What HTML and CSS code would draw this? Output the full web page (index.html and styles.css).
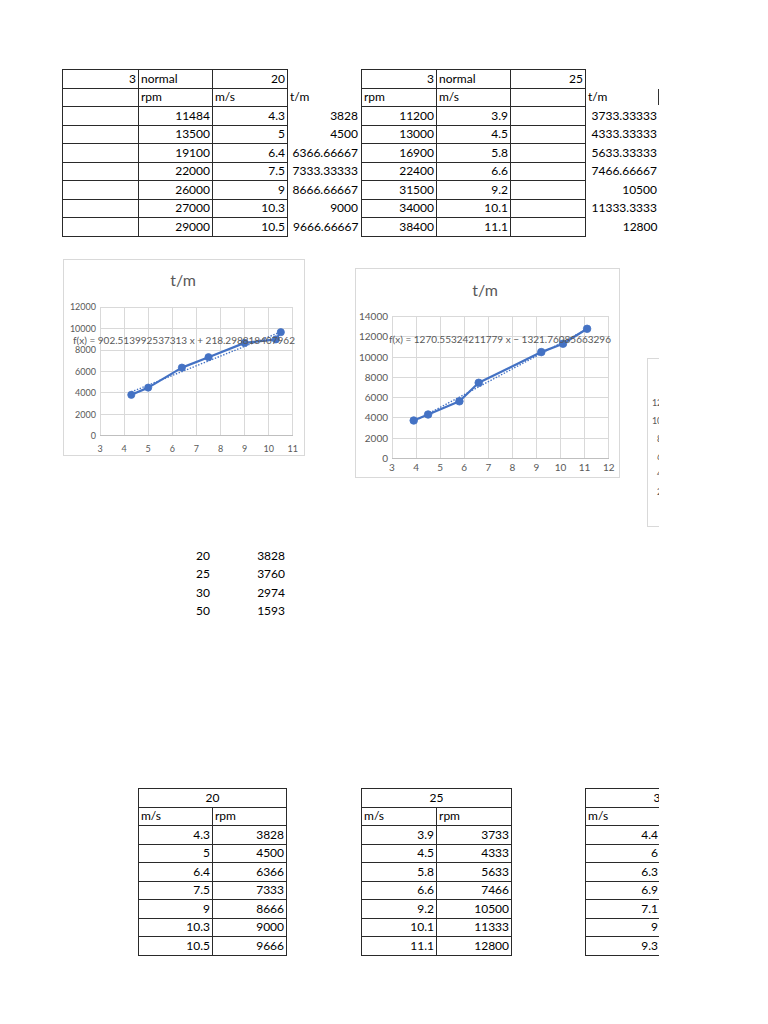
FILE: index.html
```html
<!DOCTYPE html>
<html>
<head>
<meta charset="utf-8">
<title>Sheet</title>
<link rel="stylesheet" href="styles.css">
</head>
<body>
<div class="sheet">
  <div class="band">
    <table class="grid top">
      <colgroup><col class="w76"><col class="w74"><col class="w75"><col class="w73"></colgroup>
      <tr><td class="r">3</td><td>normal</td><td class="r">20</td><td class="nb"></td></tr>
      <tr><td></td><td>rpm</td><td>m/s</td><td class="nb">t/m</td></tr>
      <tr><td></td><td class="r">11484</td><td class="r">4.3</td><td class="nb r">3828</td></tr>
      <tr><td></td><td class="r">13500</td><td class="r">5</td><td class="nb r">4500</td></tr>
      <tr><td></td><td class="r">19100</td><td class="r">6.4</td><td class="nb r">6366.66667</td></tr>
      <tr><td></td><td class="r">22000</td><td class="r">7.5</td><td class="nb r">7333.33333</td></tr>
      <tr><td></td><td class="r">26000</td><td class="r">9</td><td class="nb r">8666.66667</td></tr>
      <tr><td></td><td class="r">27000</td><td class="r">10.3</td><td class="nb r">9000</td></tr>
      <tr><td></td><td class="r">29000</td><td class="r">10.5</td><td class="nb r">9666.66667</td></tr>
    </table>
    <table class="grid top">
      <colgroup><col class="w75"><col class="w74"><col class="w75"><col class="w74"></colgroup>
      <tr><td class="r">3</td><td>normal</td><td class="r">25</td><td class="nb"></td></tr>
      <tr><td>rpm</td><td>m/s</td><td></td><td class="nb cursor">t/m</td></tr>
      <tr><td class="r">11200</td><td class="r">3.9</td><td></td><td class="nb r">3733.33333</td></tr>
      <tr><td class="r">13000</td><td class="r">4.5</td><td></td><td class="nb r">4333.33333</td></tr>
      <tr><td class="r">16900</td><td class="r">5.8</td><td></td><td class="nb r">5633.33333</td></tr>
      <tr><td class="r">22400</td><td class="r">6.6</td><td></td><td class="nb r">7466.66667</td></tr>
      <tr><td class="r">31500</td><td class="r">9.2</td><td></td><td class="nb r">10500</td></tr>
      <tr><td class="r">34000</td><td class="r">10.1</td><td></td><td class="nb r">11333.3333</td></tr>
      <tr><td class="r">38400</td><td class="r">11.1</td><td></td><td class="nb r">12800</td></tr>
    </table>
  </div>

  <div class="charts">
    <div class="chart chart1">
      <svg viewBox="0 0 242 197" width="242" height="197">
        <rect x="0.5" y="0.5" width="241" height="196" fill="#fff" stroke="#d9d9d9"/>
        <text class="ttl" x="120" y="27" text-anchor="middle">t/m</text>
        <path class="gl" d="M37 48.5H230M37 69.5H230M37 91.5H230M37 112.5H230M37 133.5H230M37 155.5H230M37.5 48V177M61.5 48V177M85.5 48V177M109.5 48V177M133.5 48V177M157.5 48V177M181.5 48V177M205.5 48V177M229.5 48V177"/>
        <path class="ax" d="M37 176.5H230"/>
        <g class="lbl9" text-anchor="end">
          <text x="33" y="51.4">12000</text>
          <text x="33" y="72.8">10000</text>
          <text x="33" y="94.3">8000</text>
          <text x="33" y="115.7">6000</text>
          <text x="33" y="137.1">4000</text>
          <text x="33" y="158.6">2000</text>
          <text x="33" y="180">0</text>
        </g>
        <g class="lbl9" text-anchor="middle">
          <text x="37" y="192.5">3</text>
          <text x="61.1" y="192.5">4</text>
          <text x="85.2" y="192.5">5</text>
          <text x="109.3" y="192.5">6</text>
          <text x="133.4" y="192.5">7</text>
          <text x="157.5" y="192.5">8</text>
          <text x="181.6" y="192.5">9</text>
          <text x="205.7" y="192.5">10</text>
          <text x="229.8" y="192.5">11</text>
        </g>
        <polyline class="series" points="68.3,135.8 85.2,128.6 118.9,108.6 145.5,98.2 181.6,83.9 212.9,80.4 217.8,73.2"/>
        <g class="mk">
          <circle cx="68.3" cy="135.8" r="3.6"/>
          <circle cx="85.2" cy="128.6" r="3.6"/>
          <circle cx="118.9" cy="108.6" r="3.6"/>
          <circle cx="145.5" cy="98.2" r="3.6"/>
          <circle cx="181.6" cy="83.9" r="3.6"/>
          <circle cx="212.9" cy="80.4" r="3.6"/>
          <circle cx="217.8" cy="73.2" r="3.6"/>
        </g>
        <line class="trend" x1="68.3" y1="132.9" x2="217.8" y2="72.9"/>
        <text class="eq" x="121" y="85" text-anchor="middle">f(x) = 902.513992537313 x + 218.298818407962</text>
      </svg>
    </div>

    <div class="chart chart2">
      <svg viewBox="0 0 265 210" width="265" height="210">
        <rect x="0.5" y="0.5" width="264" height="209" fill="#fff" stroke="#d9d9d9"/>
        <text class="ttl" x="130" y="27.5" text-anchor="middle">t/m</text>
        <path class="gl" d="M37 48.5H254M37 68.5H254M37 89.5H254M37 109.5H254M37 129.5H254M37 149.5H254M37 170.5H254M37.5 48V190M61.5 48V190M85.5 48V190M109.5 48V190M133.5 48V190M157.5 48V190M181.5 48V190M205.5 48V190M229.5 48V190M253.5 48V190"/>
        <path class="ax" d="M37 190.5H254"/>
        <g class="lbl10" text-anchor="end">
          <text x="33" y="52.2">14000</text>
          <text x="33" y="72.4">12000</text>
          <text x="33" y="92.7">10000</text>
          <text x="33" y="112.9">8000</text>
          <text x="33" y="133.1">6000</text>
          <text x="33" y="153.3">4000</text>
          <text x="33" y="173.6">2000</text>
          <text x="33" y="193.8">0</text>
        </g>
        <g class="lbl10" text-anchor="middle">
          <text x="37" y="203.2">3</text>
          <text x="61.1" y="203.2">4</text>
          <text x="85.2" y="203.2">5</text>
          <text x="109.2" y="203.2">6</text>
          <text x="133.3" y="203.2">7</text>
          <text x="157.4" y="203.2">8</text>
          <text x="181.5" y="203.2">9</text>
          <text x="205.6" y="203.2">10</text>
          <text x="229.6" y="203.2">11</text>
          <text x="253.7" y="203.2">12</text>
        </g>
        <polyline class="series" points="58.7,152.5 73.1,146.5 104.4,133.3 123.7,114.8 186.3,84.1 208,75.7 232.1,60.8"/>
        <g class="mk">
          <circle cx="58.7" cy="152.5" r="3.8"/>
          <circle cx="73.1" cy="146.5" r="3.8"/>
          <circle cx="104.4" cy="133.3" r="3.8"/>
          <circle cx="123.7" cy="114.8" r="3.8"/>
          <circle cx="186.3" cy="84.1" r="3.8"/>
          <circle cx="208" cy="75.7" r="3.8"/>
          <circle cx="232.1" cy="60.8" r="3.8"/>
        </g>
        <line class="trend" x1="58.7" y1="153.5" x2="232.1" y2="61"/>
        <text class="eq" x="145" y="74.5" text-anchor="middle">f(x) = 1270.55324211779 x − 1321.76085663296</text>
      </svg>
    </div>

    <div class="chart chart3">
      <svg viewBox="0 0 240 169" width="240" height="169">
        <rect x="0.5" y="0.5" width="239" height="168" fill="#fff" stroke="#d9d9d9"/>
        <g class="lbl9" text-anchor="end">
          <text x="31" y="48.2">12000</text>
          <text x="31" y="66.2">10000</text>
          <text x="31" y="83.9">8000</text>
          <text x="31" y="101.6">6000</text>
          <text x="31" y="119.2">4000</text>
          <text x="31" y="137">2000</text>
          <text x="31" y="154.7">0</text>
        </g>
      </svg>
    </div>
  </div>

  <table class="mini">
    <colgroup><col class="w76"><col class="w74"><col class="w75"></colgroup>
    <tr><td></td><td class="r">20</td><td class="r">3828</td></tr>
    <tr><td></td><td class="r">25</td><td class="r">3760</td></tr>
    <tr><td></td><td class="r">30</td><td class="r">2974</td></tr>
    <tr><td></td><td class="r">50</td><td class="r">1593</td></tr>
  </table>

  <div class="band bottom">
    <table class="grid pair pa">
      <colgroup><col class="w74"><col class="w74"></colgroup>
      <tr><td class="c" colspan="2">20</td></tr>
      <tr><td>m/s</td><td>rpm</td></tr>
      <tr><td class="r">4.3</td><td class="r">3828</td></tr>
      <tr><td class="r">5</td><td class="r">4500</td></tr>
      <tr><td class="r">6.4</td><td class="r">6366</td></tr>
      <tr><td class="r">7.5</td><td class="r">7333</td></tr>
      <tr><td class="r">9</td><td class="r">8666</td></tr>
      <tr><td class="r">10.3</td><td class="r">9000</td></tr>
      <tr><td class="r">10.5</td><td class="r">9666</td></tr>
    </table>
    <table class="grid pair pb">
      <colgroup><col class="w75"><col class="w75"></colgroup>
      <tr><td class="c" colspan="2">25</td></tr>
      <tr><td>m/s</td><td>rpm</td></tr>
      <tr><td class="r">3.9</td><td class="r">3733</td></tr>
      <tr><td class="r">4.5</td><td class="r">4333</td></tr>
      <tr><td class="r">5.8</td><td class="r">5633</td></tr>
      <tr><td class="r">6.6</td><td class="r">7466</td></tr>
      <tr><td class="r">9.2</td><td class="r">10500</td></tr>
      <tr><td class="r">10.1</td><td class="r">11333</td></tr>
      <tr><td class="r">11.1</td><td class="r">12800</td></tr>
    </table>
    <table class="grid pair pc">
      <colgroup><col class="w75"><col class="w75"></colgroup>
      <tr><td class="c" colspan="2">30</td></tr>
      <tr><td>m/s</td><td>rpm</td></tr>
      <tr><td class="r">4.4</td><td></td></tr>
      <tr><td class="r">6</td><td></td></tr>
      <tr><td class="r">6.3</td><td></td></tr>
      <tr><td class="r">6.9</td><td></td></tr>
      <tr><td class="r">7.1</td><td></td></tr>
      <tr><td class="r">9</td><td></td></tr>
      <tr><td class="r">9.3</td><td></td></tr>
    </table>
  </div>
</div>
</body>
</html>
```

FILE: styles.css
```css
* { box-sizing: border-box; }
html, body { margin: 0; background: #fff; }
body {
  font-family: Lato, "Open Sans", sans-serif;
  font-size: 12px;
  color: #000;
}
.sheet {
  width: 659px;
  overflow: hidden;
  padding: 69px 0 60px 62px;
}
.band { display: flex; align-items: flex-start; }
.w73 { width: 73px; }
.w74 { width: 74px; }
.w75 { width: 75px; }
.w76 { width: 76px; }

table.grid, table.mini {
  border-collapse: collapse;
  table-layout: fixed;
  flex: none;
}
table.top { width: 298px; }
.grid td, .mini td {
  height: 18.5px;
  padding: 0 2px;
  line-height: 16px;
  white-space: nowrap;
  vertical-align: middle;
}
.grid td { border: 1px solid #2a2a2a; }
.grid td.nb { border: none; }
.r { text-align: right; }
.c { text-align: center; }
.cursor { position: relative; }
.cursor::after {
  content: "";
  position: absolute;
  right: 0;
  top: 1px;
  bottom: 2px;
  width: 1px;
  background: #333;
}

.charts { position: relative; height: 310px; }
.chart { position: absolute; }
.chart svg { display: block; }
.chart1 { left: 1px; top: 22px; width: 242px; height: 197px; }
.chart2 { left: 293px; top: 31.5px; width: 265px; height: 210px; }
.chart3 { left: 585px; top: 121.5px; width: 240px; height: 169px; }

.chart text { font-family: Lato, "Open Sans", sans-serif; fill: #595959; }
.ttl { font-size: 16px; }
.lbl9 { font-size: 9px; }
.lbl10 { font-size: 10px; }
.eq { font-size: 10px; }
.gl { stroke: #d9d9d9; stroke-width: 1; fill: none; }
.ax { stroke: #bfbfbf; stroke-width: 1; fill: none; }
.series { fill: none; stroke: #4472c4; stroke-width: 2.25; stroke-linejoin: round; }
.mk circle { fill: #4472c4; stroke: #4472c4; stroke-width: 0.8; }
.trend { stroke: #4472c4; stroke-width: 1.4; stroke-dasharray: 1.4 1.6; }

.mini { width: 225px; }

.bottom { margin-top: 167.5px; }
.pa { width: 148px; margin-left: 76px; }
.pb { width: 150px; margin-left: 74px; }
.pc { width: 150px; margin-left: 73px; }
```
